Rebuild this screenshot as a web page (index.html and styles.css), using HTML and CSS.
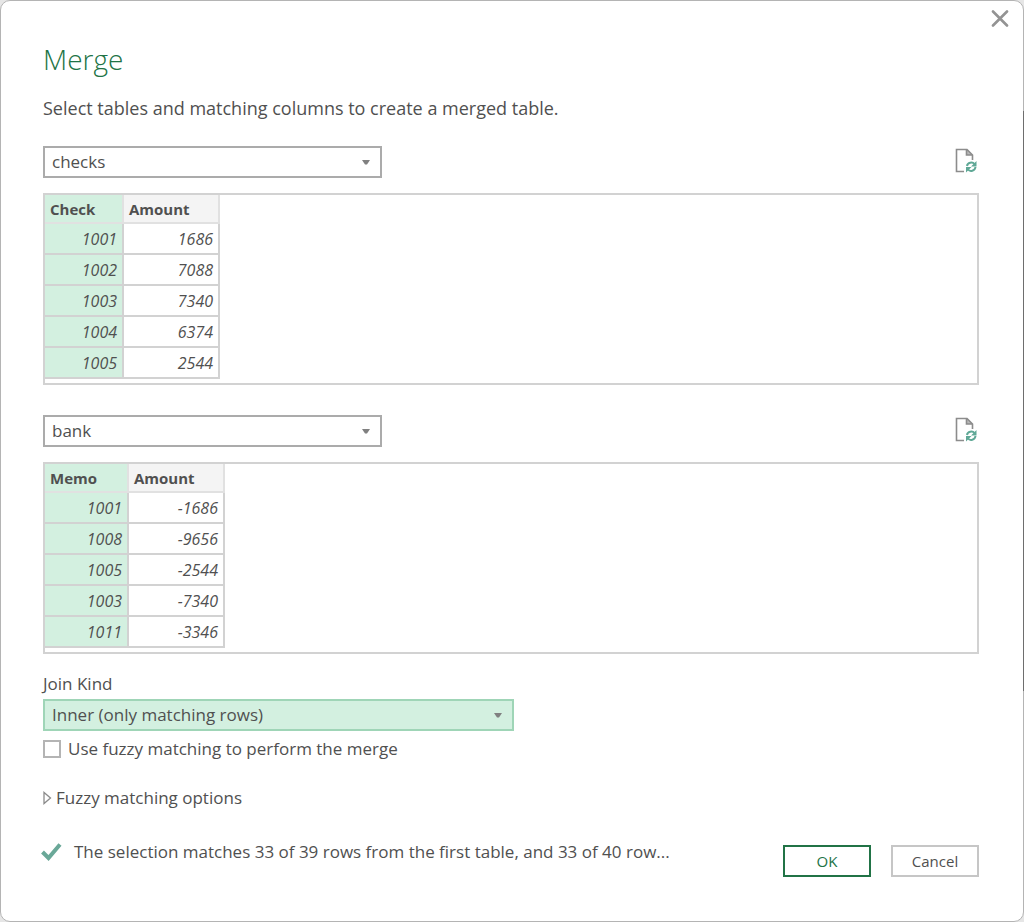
FILE: index.html
```html
<!DOCTYPE html>
<html lang="en">
<head>
<meta charset="utf-8">
<meta name="viewport" content="width=device-width, initial-scale=1">
<title>Merge</title>
<link rel="stylesheet" href="styles.css">
</head>
<body>
<main class="dialog" role="dialog" aria-labelledby="title">
  <header class="titlebar">
    <button class="close" type="button" aria-label="Close">
      <svg width="18" height="18" viewBox="0 0 18 18"><path d="M2 2.500L16 16.500M16 2.500L2 16.500" fill="none" stroke="#939393" stroke-width="2.600" stroke-linecap="round"/></svg>
    </button>
  </header>
  <form class="content">
    <h1 class="title" id="title">Merge</h1>
    <p class="intro">Select tables and matching columns to create a merged table.</p>

    <section class="source">
      <div class="source-bar">
        <div class="dropdown source-dropdown">
          <select class="select" aria-label="First table"><option>checks</option></select>
          <svg class="arrow" width="8" height="5" viewBox="0 0 8 5"><path d="M0 0H8L5 4.500H3Z" fill="#808080"/></svg>
        </div>
        <button class="refresh" type="button" aria-label="Refresh first table">
          <svg width="22" height="26" viewBox="0 0 22 26"><path d="M9 23.500H1.500V1.500H12L17.500 7V12M11.500 1V7H17" fill="none" stroke="#8c8c8c" stroke-width="1.600"/><path d="M11 1L17.500 7H11Z" fill="#8c8c8c" fill-opacity=".6"/><path d="M12 18C12.500 14.500 17.500 13.500 19.500 16M20.500 19C20 23 15 24 13 21.500" fill="none" stroke="#5fa896" stroke-width="2"/><path d="M21.500 13V18.500H16ZM11 24.500V19H16.500Z" fill="#5fa896"/></svg>
        </button>
      </div>
      <div class="preview">
        <table class="grid">
          <thead><tr><th class="key key-check" scope="col">Check</th><th class="amount" scope="col">Amount</th></tr></thead>
          <tbody>
            <tr><td class="key">1001</td><td>1686</td></tr>
            <tr><td class="key">1002</td><td>7088</td></tr>
            <tr><td class="key">1003</td><td>7340</td></tr>
            <tr><td class="key">1004</td><td>6374</td></tr>
            <tr><td class="key">1005</td><td>2544</td></tr>
          </tbody>
        </table>
      </div>
    </section>

    <section class="source">
      <div class="source-bar">
        <div class="dropdown source-dropdown">
          <select class="select" aria-label="Second table"><option>bank</option></select>
          <svg class="arrow" width="8" height="5" viewBox="0 0 8 5"><path d="M0 0H8L5 4.500H3Z" fill="#808080"/></svg>
        </div>
        <button class="refresh" type="button" aria-label="Refresh second table">
          <svg width="22" height="26" viewBox="0 0 22 26"><path d="M9 23.500H1.500V1.500H12L17.500 7V12M11.500 1V7H17" fill="none" stroke="#8c8c8c" stroke-width="1.600"/><path d="M11 1L17.500 7H11Z" fill="#8c8c8c" fill-opacity=".6"/><path d="M12 18C12.500 14.500 17.500 13.500 19.500 16M20.500 19C20 23 15 24 13 21.500" fill="none" stroke="#5fa896" stroke-width="2"/><path d="M21.500 13V18.500H16ZM11 24.500V19H16.500Z" fill="#5fa896"/></svg>
        </button>
      </div>
      <div class="preview">
        <table class="grid">
          <thead><tr><th class="key key-memo" scope="col">Memo</th><th class="amount" scope="col">Amount</th></tr></thead>
          <tbody>
            <tr><td class="key">1001</td><td>-1686</td></tr>
            <tr><td class="key">1008</td><td>-9656</td></tr>
            <tr><td class="key">1005</td><td>-2544</td></tr>
            <tr><td class="key">1003</td><td>-7340</td></tr>
            <tr><td class="key">1011</td><td>-3346</td></tr>
          </tbody>
        </table>
      </div>
    </section>

    <label class="join-label" for="join">Join Kind</label>
    <div class="dropdown join-dropdown">
      <select class="select select-active" id="join"><option>Inner (only matching rows)</option></select>
      <svg class="arrow" width="8" height="5" viewBox="0 0 8 5"><path d="M0 0H8L5 4.500H3Z" fill="#808080"/></svg>
    </div>
    <div class="fuzzy">
      <input class="check" type="checkbox" id="fuzzy">
      <label for="fuzzy">Use fuzzy matching to perform the merge</label>
    </div>
    <details class="options">
      <summary class="summary"><svg width="9" height="14" viewBox="0 0 9 14"><path d="M1 1.500V12.500L7.500 7Z" fill="none" stroke="#8c8c8c" stroke-width="1.300"/></svg>Fuzzy matching options</summary>
    </details>

    <footer class="footer">
      <p class="status">
        <svg width="22" height="20" viewBox="0 0 22 20"><path d="M1.500 10L7.500 16L19 2.500" fill="none" stroke="#6aa898" stroke-width="4"/></svg>
        <span>The selection matches 33 of 39 rows from the first table, and 33 of 40 row...</span>
      </p>
      <div class="actions">
        <button class="button button-primary" type="submit">OK</button>
        <button class="button" type="button">Cancel</button>
      </div>
    </footer>
  </form>
</main>
</body>
</html>
```
FILE: styles.css
```css
* { box-sizing: border-box; }

body {
  margin: 0;
  background: #e6e6e6;
  color: #505050;
  font: 17px/24px "Open Sans", "Noto Sans", sans-serif;
}

.dialog {
  position: relative;
  min-height: 100vh;
  border: 1px solid #b4b4b4;
  border-radius: 10px;
  background: #fff;
}

/* Darker stretch of the window edge */
.dialog::after {
  content: "";
  position: absolute;
  top: 12%;
  right: -1px;
  bottom: 25%;
  width: 1px;
  background: #6e6e6e;
}

.titlebar {
  display: flex;
  justify-content: flex-end;
  height: 36px;
  padding: 8px 14px 0 0;
}

button, select, input { font: inherit; color: inherit; margin: 0; }

.close, .refresh {
  padding: 0;
  border: 0;
  background: none;
  line-height: 0;
}

.close { height: 18px; }

.content { padding: 0 44px 43px 42px; }

.title {
  margin: 0;
  color: #217346;
  font-size: 28px;
  font-weight: 300;
  line-height: 44px;
}

.intro {
  margin: 14px 0 25px;
  font-size: 18px;
  line-height: 26px;
}

.source { margin-bottom: 30px; }

.source-bar {
  display: flex;
  justify-content: space-between;
  align-items: flex-start;
  margin-bottom: 15px;
}

.refresh { padding: 2px 2px 0 0; }

.dropdown { display: grid; align-items: center; }
.dropdown > * { grid-area: 1 / 1; }
.source-dropdown { width: 339px; }
.join-dropdown { width: 471px; }

.select {
  width: 100%;
  height: 32px;
  padding: 0 7px;
  border: 2px solid #ababab;
  border-radius: 0;
  background: #fff;
  font-size: 17px;
  appearance: none;
}

.select-active { border-color: #9fd5b7; background: #d3f0e0; }

.arrow {
  justify-self: end;
  margin-right: 12px;
  pointer-events: none;
}

.preview {
  height: 192px;
  border: 2px solid #d2d2d2;
  overflow: auto;
}

.grid {
  border-collapse: separate;
  border-spacing: 0;
  table-layout: fixed;
  width: 0;
  font-size: 15px;
  line-height: 20px;
}

.grid th, .grid td {
  padding: 0 5px;
  border: solid #d2d2d2;
  border-width: 0 2px 2px 0;
}

.grid th {
  height: 29px;
  border-color: #e1e1e1;
  background: #f4f4f4;
  text-align: left;
}

.grid td {
  height: 31px;
  text-align: right;
  font-size: 16px;
  font-style: italic;
}

.grid .key { background: #d3f0e0; }
.key-check { width: 79px; }
.key-memo { width: 84px; }
.amount { width: 96px; }

.join-label { display: block; margin-top: -12px; margin-bottom: 3px; }

.fuzzy {
  display: flex;
  align-items: center;
  gap: 7px;
  margin-top: 6px;
}

.check {
  width: 18px;
  height: 18px;
  border: 2px solid #b4b4b4;
  background: #fff;
  appearance: none;
}

.options { margin-top: 25px; }

.summary {
  display: flex;
  align-items: center;
  gap: 4px;
  list-style: none;
}

.footer {
  display: flex;
  justify-content: space-between;
  align-items: flex-start;
  margin-top: 30px;
}

.status {
  display: flex;
  align-items: center;
  gap: 11px;
  margin: 0 0 0 -2px;
}

.actions { display: flex; gap: 20px; padding-top: 5px; }

.button {
  width: 88px;
  height: 32px;
  border: 2px solid #c6c6c6;
  background: #fff;
  font-size: 15px;
}

.button-primary { border-color: #217346; color: #217346; }
```
